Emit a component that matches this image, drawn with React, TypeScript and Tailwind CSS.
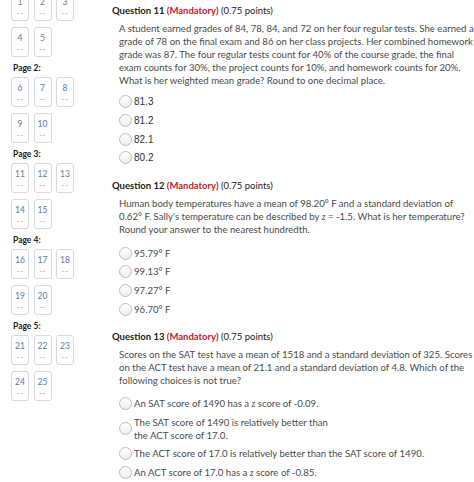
import React from "react";

type Question = {
  num: number;
  lines: string[];
  options: { lines: React.ReactNode[] }[];
  arialOptions?: boolean;
};

const pages: { label?: string; rows: number[][] }[] = [
  { rows: [[1, 2, 3], [4, 5]] },
  { label: "Page 2:", rows: [[6, 7, 8], [9, 10]] },
  { label: "Page 3:", rows: [[11, 12, 13], [14, 15]] },
  { label: "Page 4:", rows: [[16, 17, 18], [19, 20]] },
  { label: "Page 5:", rows: [[21, 22, 23], [24, 25]] },
];

const Z = () => <i className="font-['Liberation_Serif',serif]">z</i>;

const questions: Question[] = [
  {
    num: 11,
    lines: [
      "A student earned grades of 84, 78, 84, and 72 on her four regular tests. She earned a",
      "grade of 78 on the final exam and 86 on her class projects. Her combined homework",
      "grade was 87. The four regular tests count for 40% of the course grade, the final",
      "exam counts for 30%, the project counts for 10%, and homework counts for 20%.",
      "What is her weighted mean grade? Round to one decimal place.",
    ],
    options: [{ lines: ["81.3"] }, { lines: ["81.2"] }, { lines: ["82.1"] }, { lines: ["80.2"] }],
    arialOptions: true,
  },
  {
    num: 12,
    lines: [],
    options: [
      { lines: ["95.79° F"] },
      { lines: ["99.13° F"] },
      { lines: ["97.27° F"] },
      { lines: ["96.70° F"] },
    ],
  },
  {
    num: 13,
    lines: [
      "Scores on the SAT test have a mean of 1518 and a standard deviation of 325. Scores",
      "on the ACT test have a mean of 21.1 and a standard deviation of 4.8. Which of the",
      "following choices is not true?",
    ],
    options: [
      { lines: [<>An SAT score of 1490 has a <Z /> score of -0.09.</>] },
      { lines: ["The SAT score of 1490 is relatively better than", "the ACT score of 17.0."] },
      { lines: ["The ACT score of 17.0 is relatively better than the SAT score of 1490."] },
      { lines: [<>An ACT score of 17.0 has a <Z /> score of -0.85.</>] },
    ],
  },
];

function Tile({ n }: { n: number }) {
  return (
    <div className="w-[18px] h-[30px] border border-[#d6dbe2] rounded-[3px] flex flex-col items-center bg-white">
      <span className="text-[8.5px] leading-[10px] text-[#5a7da6] mt-[5px]">{n}</span>
      <span className="text-[8px] leading-[10px] text-[#a0a6ad] mt-[1px] tracking-[0.5px]">--</span>
    </div>
  );
}

function Radio() {
  return (
    <span className="w-[13px] h-[13px] shrink-0 rounded-full border border-[#b9bec4] bg-gradient-to-b from-white to-[#eceef0]" />
  );
}

function Body({ q }: { q: Question }) {
  if (q.num === 12) {
    return (
      <div className="pl-[7px] text-[9.6px] leading-[13px] text-[#494c4e] mt-[5px]">
        <div>Human body temperatures have a mean of 98.20° F and a standard deviation of</div>
        <div>
          0.62° F. Sally's temperature can be described by <Z /> = -1.5. What is her temperature?
        </div>
        <div>Round your answer to the nearest hundredth.</div>
      </div>
    );
  }
  return (
    <div className="pl-[7px] text-[9.6px] leading-[13px] text-[#494c4e] mt-[5px]">
      {q.lines.map((l, i) => (
        <div key={i}>{l}</div>
      ))}
    </div>
  );
}

export default function App() {
  return (
    <div className="flex w-[474px] h-[482px] overflow-hidden bg-white font-['Lato','Liberation_Sans',sans-serif]">
      {/* Sidebar */}
      <div className="w-[100px] shrink-0 pl-[11px] -mt-[9px]">
        {pages.map((p, pi) => (
          <div key={pi}>
            {p.label && (
              <div className="h-[20px] flex items-center pt-[2px] pl-[2px] text-[8.5px] font-bold text-[#202122]">
                {p.label}
              </div>
            )}
            <div className="flex flex-col gap-[6px]">
              {p.rows.map((r, ri) => (
                <div key={ri} className="flex gap-[4.5px]">
                  {r.map((n) => (
                    <Tile key={n} n={n} />
                  ))}
                </div>
              ))}
            </div>
          </div>
        ))}
      </div>

      {/* Questions */}
      <div className="flex-1 pl-[12px] pt-[3.5px]">
        {questions.map((q, qi) => (
          <div key={q.num} className={qi === 0 ? "" : qi === 1 ? "mt-[12px]" : "mt-[11px]"}>
            <div className="text-[9.5px] leading-[13px] text-[#202122]">
              <span className="font-bold">Question {q.num} </span>
              <span className="font-bold text-[#c3202e]">(Mandatory)</span>
              <span> (0.75 points)</span>
            </div>
            <Body q={q} />
            <div className={`pl-[6.5px] ${qi === 0 ? "mt-[6px]" : "mt-[7.5px]"}`}>
              {q.options.map((o, oi) => (
                <div key={oi} className="flex items-center min-h-[18.7px] py-[2.85px]">
                  <Radio />
                  <div
                    className={`ml-[2.5px] leading-[13px] ${
                      q.arialOptions
                        ? "font-['Liberation_Sans',sans-serif] text-[10px] text-[#333]"
                        : "text-[9.6px] text-[#494c4e]"
                    }`}
                  >
                    {o.lines.map((l, li) => (
                      <div key={li}>{l}</div>
                    ))}
                  </div>
                </div>
              ))}
            </div>
          </div>
        ))}
      </div>
    </div>
  );
}
